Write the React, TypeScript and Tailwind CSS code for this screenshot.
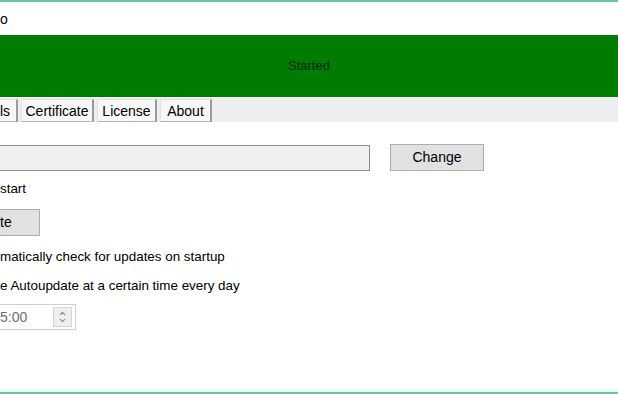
import { ChevronUp, ChevronDown } from "lucide-react";

const Tab = (props: { label: string; className?: string }) => {
    return (
        <div
            className={`h-[23px] flex items-center justify-center bg-[#f7f7f7] border-t border-l border-[#e2e2e2] border-r-2 border-r-[#9a9a9a] border-b border-b-[#b5b5b5] text-[14px] leading-none text-black ${props.className ?? ""}`}
        >
            {props.label}
        </div>
    );
};

export default function App() {
    return (
        <div className="w-[618px] h-[394px] overflow-hidden bg-white flex flex-col font-['Liberation_Sans',Arial,sans-serif] text-black">
            <div className="h-[2px] bg-[#69c5a7]" />
            {/* title bar */}
            <div className="h-[33px] flex items-center bg-white">
                <span className="text-[14px] leading-none">o</span>
            </div>
            {/* status banner */}
            <div className="h-[62px] bg-[#007d00] flex items-center justify-center">
                <span className="text-[13px] text-[#0a240a]">Started</span>
            </div>
            {/* tabs */}
            <div className="h-[26px] bg-[#eeeef1] border-t border-[#f8f8f8] border-b border-b-white flex items-start pt-[1px] gap-[3px]">
                <Tab label="ls" className="w-[19px] -ml-[1px] justify-start" />
                <Tab label="Certificate" className="w-[73px]" />
                <Tab label="License" className="w-[60px]" />
                <Tab label="About" className="w-[52px]" />
            </div>
            {/* content */}
            <div className="flex-1 flex flex-col text-[13.4px]">
                <div className="flex items-start mt-[21px]">
                    <div className="w-[370px] h-[26px] mt-[1px] bg-[#f0f0f0] border border-[#8c8c8c] border-l-0" />
                    <button className="ml-[20px] w-[94px] h-[27px] bg-[#e1e1e1] border border-[#adadad] text-[14px]">
                        Change
                    </button>
                </div>
                <div className="mt-[9px] h-[18px] leading-[18px]">start</div>
                <div className="mt-[11px]">
                    <button className="w-[40px] h-[27px] bg-[#e1e1e1] border border-[#adadad] border-l-0 text-left text-[14px]">
                        te
                    </button>
                </div>
                <div className="mt-[12px] h-[18px] leading-[18px]">matically check for updates on startup</div>
                <div className="mt-[11px] h-[18px] leading-[18px]">e Autoupdate at a certain time every day</div>
                <div className="mt-[9px] w-[76px] h-[26px] border border-[#cfcfcf] border-l-0 flex items-center justify-between pr-[3px]">
                    <span className="text-[#6d6d6d] text-[14px]">5:00</span>
                    <div className="w-[19px] h-[20px] bg-[#eeeeee] border border-[#d6d6d6] flex flex-col items-center justify-center">
                        <ChevronUp size={9} strokeWidth={3} className="text-[#8a8a8a] -mb-[1px]" />
                        <ChevronDown size={9} strokeWidth={3} className="text-[#8a8a8a] -mt-[1px]" />
                    </div>
                </div>
            </div>
            <div className="h-[4px] bg-gradient-to-b from-white to-[#dff6f1]" />
            <div className="h-[2px] bg-[#69c5a7]" />
        </div>
    );
}
